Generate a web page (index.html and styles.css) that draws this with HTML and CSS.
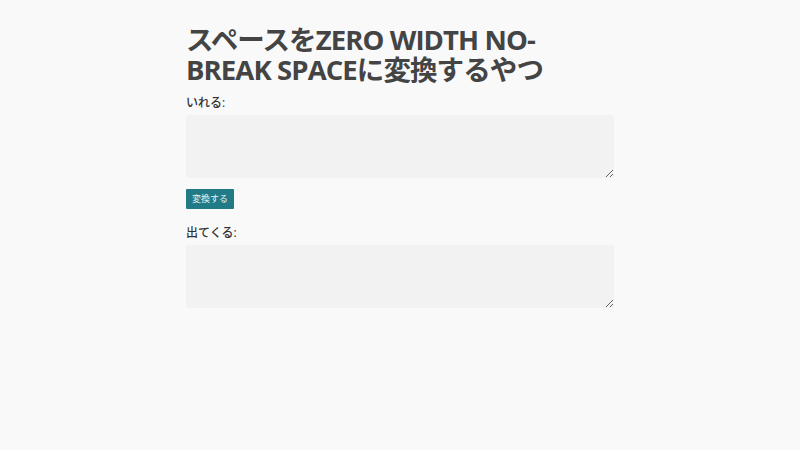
FILE: index.html
```html
<!DOCTYPE html>
<html lang="ja">
<head>
<meta charset="utf-8">
<title>スペースをZERO WIDTH NO-BREAK SPACEに変換するやつ</title>
<link rel="stylesheet" href="styles.css">
</head>
<body>
<main class="wrap">
  <h1 class="title">スペースをZERO WIDTH NO-BREAK SPACEに変換するやつ</h1>
  <label class="label" for="in">いれる:</label>
  <textarea id="in" class="box"></textarea>
  <button class="btn" type="button">変換する</button>
  <label class="label label-out" for="out">出てくる:</label>
  <textarea id="out" class="box"></textarea>
</main>
</body>
</html>
```

FILE: styles.css
```css
html, body {
  margin: 0;
  padding: 0;
  background: #f9f9f9;
}
body {
  font-family: "Open Sans", "Noto Sans CJK JP", sans-serif;
  color: #444;
}
.wrap {
  width: 428px;
  margin: 0 auto;
  padding-top: 25px;
  display: flex;
  flex-direction: column;
  align-items: flex-start;
}
.title {
  font-size: 27.5px;
  line-height: 30px;
  font-weight: 700;
  margin: 0 0 9px 0;
  width: 400px;
  color: #444;
  letter-spacing: -0.9px;
}
.label {
  font-size: 12px;
  font-weight: 500;
  line-height: 18px;
  margin-bottom: 3px;
  color: #333;
}
.label-out {
  margin-top: 15px;
}
.box {
  width: 428px;
  height: 63px;
  box-sizing: border-box;
  border: none;
  border-radius: 3px;
  background: #f2f2f2;
  margin: 0;
  padding: 6px;
  font-family: inherit;
  display: block;
}
.btn {
  margin-top: 11px;
  background: #217b86;
  color: #e8f2f3;
  border: none;
  border-radius: 1px;
  font-family: "Open Sans", "Noto Sans CJK JP", sans-serif;
  font-size: 9px;
  height: 20px;
  padding: 0 6px;
  line-height: 20px;
}
```
